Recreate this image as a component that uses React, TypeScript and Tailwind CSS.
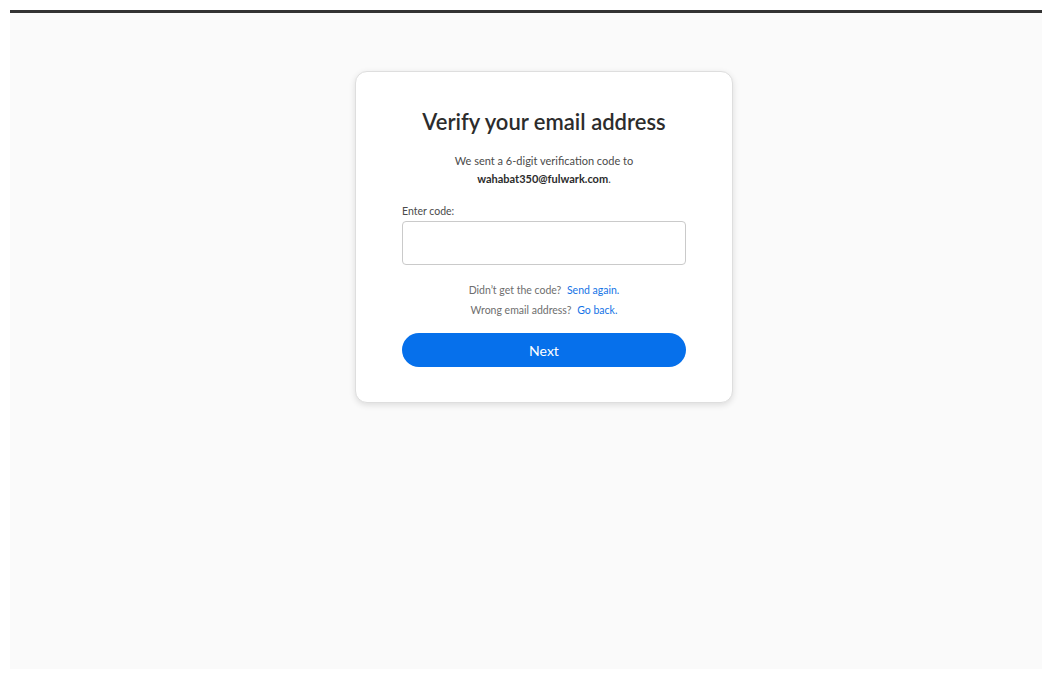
import React, { useState } from 'react'

const App = () => {
    let [code, setCode] = useState('')

    return (
        <div className="min-h-screen bg-white p-[10px] pb-[10px]" style={{ fontFamily: 'Lato, "Noto Sans", sans-serif' }}>
            <div className="flex h-[659px] flex-col border-t-[3px] border-[#333333] bg-[#fafafa]">
                {/* Card */}
                <div className="ml-[345px] mt-[58px] w-[378px] rounded-[12px] border border-[#dedede] bg-white px-[46px] pt-[35px] pb-[35px] shadow-[0_2px_6px_rgba(0,0,0,0.12)]">
                    <h1 className="text-center text-[22px] font-semibold leading-[30px] text-[#2c2c2c]">
                        Verify your email address
                    </h1>
                    <p className="mt-[15px] text-center text-[11px] leading-[18px] text-[#4b4b4b]">
                        We sent a 6-digit verification code to
                        <br />
                        <span className="font-bold text-[#2c2c2c]">wahabat350@fulwark.com</span>.
                    </p>

                    <label htmlFor="code" className="mt-[16px] block text-[10.5px] leading-[14px] text-[#4b4b4b]">
                        Enter code:
                    </label>
                    <input
                        id="code"
                        type="text"
                        value={code}
                        onChange={(e) => setCode(e.target.value)}
                        className="mt-[3px] block h-[44px] w-full rounded-[4px] border border-[#cacaca] bg-white px-3 text-[14px] outline-none"
                    />

                    <p className="mt-[18px] text-center text-[10.5px] leading-[14px] text-[#6e6e6e]">
                        Didn&#8217;t get the code? <a href="#" className="ml-[3px] text-[#1473e6]">Send again.</a>
                    </p>
                    <p className="mt-[6px] text-center text-[10.5px] leading-[14px] text-[#6e6e6e]">
                        Wrong email address? <a href="#" className="ml-[3px] text-[#1473e6]">Go back.</a>
                    </p>

                    <button type="button" className="mt-[16px] flex h-[34px] w-full items-center justify-center rounded-full bg-[#0670eb] text-[14px] text-white">
                        Next
                    </button>
                </div>
            </div>
        </div>
    )
}

export default App
